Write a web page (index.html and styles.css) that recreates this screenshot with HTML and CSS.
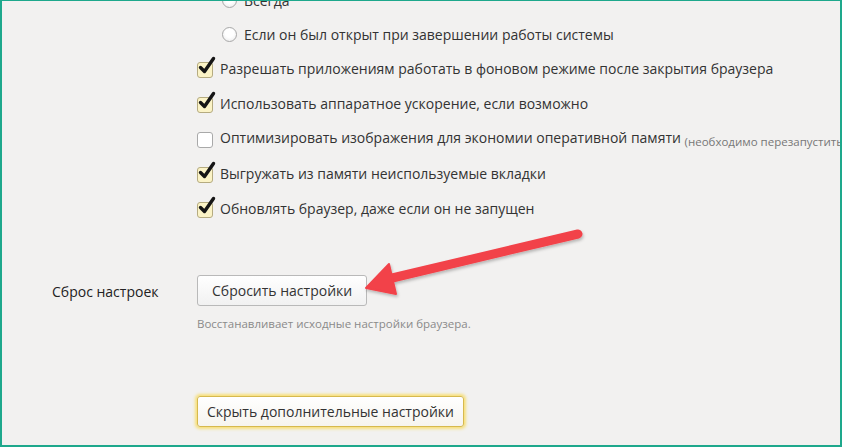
FILE: index.html
```html
<!DOCTYPE html>
<html lang="ru">
<head>
<meta charset="utf-8">
<link rel="stylesheet" href="styles.css">
</head>
<body>
<div class="frame">
  <div class="page">
    <div class="section">
      <div class="label"></div>
      <div class="options">
        <div class="row radio-row"><span class="radio"></span><span class="text">Всегда</span></div>
        <div class="row radio-row"><span class="radio"></span><span class="text">Если он был открыт при завершении работы системы</span></div>
        <div class="row"><span class="check on"><svg viewBox="0 0 20 20" width="20" height="20"><path d="M3.5 11.5 L7.5 15.5 L16.5 2.5" fill="none" stroke="#151515" stroke-width="3.4" stroke-linecap="round" stroke-linejoin="round"/></svg></span><span class="text">Разрешать приложениям работать в фоновом режиме после закрытия браузера</span></div>
        <div class="row"><span class="check on"><svg viewBox="0 0 20 20" width="20" height="20"><path d="M3.5 11.5 L7.5 15.5 L16.5 2.5" fill="none" stroke="#151515" stroke-width="3.4" stroke-linecap="round" stroke-linejoin="round"/></svg></span><span class="text">Использовать аппаратное ускорение, если возможно</span></div>
        <div class="row"><span class="check"></span><span class="text">Оптимизировать изображения для экономии оперативной памяти <span class="note">(необходимо перезапустить браузер)</span></span></div>
        <div class="row"><span class="check on"><svg viewBox="0 0 20 20" width="20" height="20"><path d="M3.5 11.5 L7.5 15.5 L16.5 2.5" fill="none" stroke="#151515" stroke-width="3.4" stroke-linecap="round" stroke-linejoin="round"/></svg></span><span class="text">Выгружать из памяти неиспользуемые вкладки</span></div>
        <div class="row"><span class="check on"><svg viewBox="0 0 20 20" width="20" height="20"><path d="M3.5 11.5 L7.5 15.5 L16.5 2.5" fill="none" stroke="#151515" stroke-width="3.4" stroke-linecap="round" stroke-linejoin="round"/></svg></span><span class="text">Обновлять браузер, даже если он не запущен</span></div>
      </div>
    </div>
    <div class="section reset">
      <div class="label">Сброс настроек</div>
      <div class="options">
        <button class="btn">Сбросить настройки</button>
        <div class="hint">Восстанавливает исходные настройки браузера.</div>
      </div>
    </div>
    <div class="section hide">
      <div class="label"></div>
      <div class="options">
        <button class="btn focus">Скрыть дополнительные настройки</button>
      </div>
    </div>
  </div>
  <svg class="arrow" width="842" height="447" viewBox="0 0 842 447">
    <defs>
      <filter id="sh" x="-10%" y="-30%" width="120%" height="160%">
        <feDropShadow dx="1" dy="2" stdDeviation="1.5" flood-color="#000" flood-opacity="0.25"/>
      </filter>
    </defs>
    <g filter="url(#sh)" fill="#f2424a" stroke="#f2424a">
      <line x1="388" y1="279" x2="578" y2="234" stroke-width="9" stroke-linecap="round"/>
      <polygon points="366,288 389,264 396,294" stroke-width="2" stroke-linejoin="round"/>
    </g>
  </svg>
</div>
</body>
</html>
```
FILE: styles.css
```css
html, body {
  margin: 0;
  padding: 0;
  background: #f2f1f0;
}
.frame {
  position: relative;
  width: 842px;
  height: 447px;
  box-sizing: border-box;
  border: 2px solid #1ea88c;
  border-top-width: 1px;
  background: #f2f1f0;
  overflow: hidden;
  font-family: "Open Sans", "Noto Sans", sans-serif;
  color: #333;
}
.page {
  display: flex;
  flex-direction: column;
  margin-top: -18px;
  padding-left: 50px;
}
.section {
  display: flex;
}
.label {
  width: 145px;
  flex: none;
  font-size: 14px;
  color: #222;
  white-space: nowrap;
}
.options {
  display: flex;
  flex-direction: column;
  white-space: nowrap;
}
.row {
  height: 35px;
  display: flex;
  align-items: center;
  font-size: 14px;
}
.radio-row {
  padding-left: 25px;
  height: 34px;
}
.radio {
  width: 13px;
  height: 13px;
  border-radius: 50%;
  border: 1px solid #a8a8a8;
  background: radial-gradient(circle at 50% 40%, #fff 40%, #e8e8e8 100%);
  margin-right: 7px;
  flex: none;
}
.check {
  position: relative;
  width: 14px;
  height: 14px;
  border: 1px solid #a9a9a9;
  border-radius: 3px;
  background: #fff;
  margin-right: 7px;
  flex: none;
  margin-top: 2px;
}
.check.on {
  background: #fbf3c6;
  border-color: #b5ab80;
}
.check svg {
  position: absolute;
  left: -1px;
  top: -7px;
}
.note {
  font-size: 11.5px;
  color: #777;
  vertical-align: -3px;
}
.reset {
  margin-top: 49px;
}
.reset .label {
  padding-top: 7px;
}
.btn {
  font-family: "Open Sans", "Noto Sans", sans-serif;
  font-size: 14px;
  color: #333;
  height: 31px;
  padding: 0 14px;
  border: 1px solid #b9b9b9;
  border-radius: 3px;
  background: linear-gradient(#ffffff, #f1f1f1);
  align-self: flex-start;
}
.hint {
  margin-top: 10px;
  font-size: 11.5px;
  color: #8a8a8a;
}
.hide {
  margin-top: 65px;
}
.btn.focus {
  padding: 0 9px;
  border-color: #d6b94e;
  box-shadow: 0 0 3px 2px #f7e07a;
  background: linear-gradient(#ffffff, #f6f4ee);
}
.arrow {
  position: absolute;
  left: -2px;
  top: -1px;
  pointer-events: none;
}
```
